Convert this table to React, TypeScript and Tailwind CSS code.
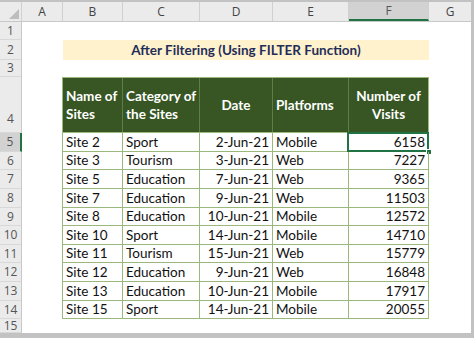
import React from 'react';

const font = { fontFamily: 'Lato, "Open Sans", sans-serif' };

const rows = [
  { n: 5, h: 'h-[19px]', site: 'Site 2', cat: 'Sport', date: '2-Jun-21', plat: 'Mobile', visits: 6158 },
  { n: 6, h: 'h-[18px]', site: 'Site 3', cat: 'Tourism', date: '3-Jun-21', plat: 'Web', visits: 7227 },
  { n: 7, h: 'h-[19px]', site: 'Site 5', cat: 'Education', date: '7-Jun-21', plat: 'Web', visits: 9365 },
  { n: 8, h: 'h-[19px]', site: 'Site 7', cat: 'Education', date: '9-Jun-21', plat: 'Web', visits: 11503 },
  { n: 9, h: 'h-[18px]', site: 'Site 8', cat: 'Education', date: '10-Jun-21', plat: 'Mobile', visits: 12572 },
  { n: 10, h: 'h-[19px]', site: 'Site 10', cat: 'Sport', date: '14-Jun-21', plat: 'Mobile', visits: 14710 },
  { n: 11, h: 'h-[18px]', site: 'Site 11', cat: 'Tourism', date: '15-Jun-21', plat: 'Web', visits: 15779 },
  { n: 12, h: 'h-[19px]', site: 'Site 12', cat: 'Education', date: '9-Jun-21', plat: 'Web', visits: 16848 },
  { n: 13, h: 'h-[19px]', site: 'Site 13', cat: 'Education', date: '10-Jun-21', plat: 'Mobile', visits: 17917 },
  { n: 14, h: 'h-[18px]', site: 'Site 15', cat: 'Sport', date: '14-Jun-21', plat: 'Mobile', visits: 20055 },
];

const RowNum = ({ n, active }: { n: number; active?: boolean }) => (
  <div
    className={`w-[22px] shrink-0 flex items-center justify-center text-[12px] text-[#555] border-b border-[#d8d8d8] ${
      active ? 'bg-[#d2d2d2] border-r-2 border-r-[#217346]' : 'bg-[#ebebeb] border-r border-r-[#c8c8c8]'
    }`}
    style={{ fontFamily: '"Open Sans", sans-serif' }}
  >
    {n}
  </div>
);

const cell = 'border-r border-b border-[#9ab87c] flex items-center text-[13.5px] text-[#111] px-[3px] overflow-visible whitespace-nowrap';

export default function App() {
  return (
    <div className="w-[474px] h-[338px] bg-[#c2c2c2] pt-[2px] pr-[3px] overflow-hidden" style={font}>
      <div className="bg-white flex flex-col h-[331px] overflow-hidden">
        {/* column headers */}
        <div className="flex h-[20px] shrink-0 bg-[#ebebeb] border-b border-[#c8c8c8] text-[12px] text-[#444]" style={{ fontFamily: '"Open Sans", sans-serif' }}>
          <div className="w-[22px] relative border-r border-[#d0d0d0]">
            <div className="absolute right-[2px] bottom-[2px] w-0 h-0 border-l-[10px] border-l-transparent border-b-[10px] border-b-[#bdbdbd]" />
          </div>
          <div className="w-[41px] flex items-center justify-center border-r border-[#d0d0d0]">A</div>
          <div className="w-[60px] flex items-center justify-center border-r border-[#d0d0d0]">B</div>
          <div className="w-[77px] flex items-center justify-center border-r border-[#d0d0d0]">C</div>
          <div className="w-[73px] flex items-center justify-center border-r border-[#d0d0d0]">D</div>
          <div className="w-[76px] flex items-center justify-center border-r border-[#d0d0d0]">E</div>
          <div className="w-[80px] flex items-center justify-center border-r border-[#d0d0d0] bg-[#d2d2d2] border-b-2 border-b-[#217346] text-[#555]">F</div>
          <div className="w-[42px] flex items-center justify-center">G</div>
        </div>

        {/* row 1 */}
        <div className="flex h-[18px] shrink-0">
          <RowNum n={1} />
        </div>

        {/* row 2 - title */}
        <div className="flex h-[20px] shrink-0">
          <RowNum n={2} />
          <div className="w-[41px]" />
          <div className="w-[366px] bg-[#fff2cc] flex items-center justify-center font-bold text-[13.5px] text-[#1f2d5a]">
            After Filtering (Using FILTER Function)
          </div>
        </div>

        {/* row 3 */}
        <div className="flex h-[17px] shrink-0">
          <RowNum n={3} />
        </div>

        {/* row 4 - table header */}
        <div className="flex h-[56px] shrink-0">
          <div className="w-[22px] shrink-0 flex items-end justify-center pb-[4px] text-[12px] text-[#555] bg-[#ebebeb] border-b border-[#d8d8d8] border-r border-r-[#c8c8c8]" style={{ fontFamily: '"Open Sans", sans-serif' }}>
            4
          </div>
          <div className="w-[41px] border-r border-[#9ab87c]" />
          <div className="flex bg-[#375623] text-white font-bold text-[13.5px] leading-[18px] border-t border-b border-[#9ab87c]">
            <div className="w-[60px] border-r border-[#5f7d45] flex items-center px-[3px] whitespace-nowrap"><span>Name of<br />Sites</span></div>
            <div className="w-[77px] border-r border-[#5f7d45] flex items-center px-[3px] whitespace-nowrap"><span>Category of<br />the Sites</span></div>
            <div className="w-[73px] border-r border-[#5f7d45] flex items-center justify-center">Date</div>
            <div className="w-[76px] border-r border-[#5f7d45] flex items-center px-[3px]">Platforms</div>
            <div className="w-[80px] border-r border-[#9ab87c] flex items-center justify-center text-center">Number of Visits</div>
          </div>
        </div>

        {/* data rows */}
        {rows.map((r) => (
          <div key={r.n} className={`flex shrink-0 ${r.h}`}>
            <RowNum n={r.n} active={r.n === 5} />
            <div className="w-[41px] border-r border-[#9ab87c]" />
            <div className={`w-[60px] ${cell}`}>{r.site}</div>
            <div className={`w-[77px] ${cell}`}>{r.cat}</div>
            <div className={`w-[73px] ${cell} justify-end`}>{r.date}</div>
            <div className={`w-[76px] ${cell}`}>{r.plat}</div>
            <div className={`w-[80px] ${cell} justify-end relative`}>
              {r.visits}
              {r.n === 5 && (
                <>
                  <div className="absolute left-[-2px] top-[-1px] right-[-1px] bottom-[-1px] border-2 border-[#217346]" />
                  <div className="absolute right-[-4px] bottom-[-4px] w-[6px] h-[6px] bg-[#217346] border border-white" />
                </>
              )}
            </div>
          </div>
        ))}

        {/* row 15 */}
        <div className="flex h-[14px] shrink-0">
          <RowNum n={15} />
        </div>
      </div>
    </div>
  );
}
